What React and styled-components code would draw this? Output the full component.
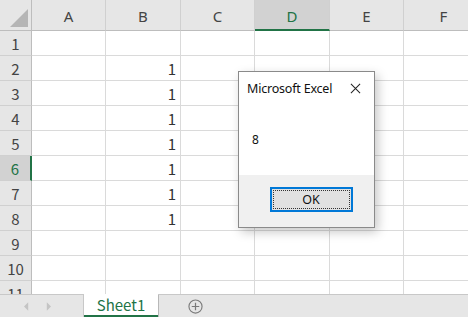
import React from "react";
import styled, { createGlobalStyle, css } from "styled-components";

const GlobalStyle = createGlobalStyle`
  html, body {
    margin: 0;
    padding: 0;
    background: #ffffff;
    overflow: hidden;
  }
  * { box-sizing: border-box; }
`;

const COLS = ["A", "B", "C", "D", "E", "F"];
const COL_WIDTHS = [74, 75, 74, 75, 74, 80];
const ROWS = [1, 2, 3, 4, 5, 6, 7, 8, 9, 10, 11];
const SELECTED_COL = "D";
const SELECTED_ROW = 6;

const values = { 2: "1", 3: "1", 4: "1", 5: "1", 6: "1", 7: "1", 8: "1" };

export default function App() {
  return (
    <>
      <GlobalStyle />
      <Page>
        <Sheet>
          <Grid>
            <Corner>
              <Triangle />
            </Corner>
            {COLS.map((c) => (
              <ColHeader key={c} $selected={c === SELECTED_COL}>
                {c}
              </ColHeader>
            ))}
            {ROWS.map((r) => (
              <React.Fragment key={r}>
                <RowHeader $selected={r === SELECTED_ROW}>{r}</RowHeader>
                {COLS.map((c) => (
                  <Cell key={c}>{c === "B" ? values[r] : null}</Cell>
                ))}
              </React.Fragment>
            ))}
          </Grid>

          <Dialog>
            <DialogBody>
              <TitleRow>
                <Title>Microsoft Excel</Title>
                <CloseIcon viewBox="0 0 12 12">
                  <path d="M1 1 L11 11 M11 1 L1 11" stroke="#222" strokeWidth="1.1" />
                </CloseIcon>
              </TitleRow>
              <Message>8</Message>
            </DialogBody>
            <DialogFooter>
              <OkButton>
                <Focus>OK</Focus>
              </OkButton>
            </DialogFooter>
          </Dialog>
        </Sheet>

        <TabBar>
          <Nav>
            <Arrow viewBox="0 0 6 10">
              <path d="M5 0 L0 5 L5 10 Z" fill="#c4c4c4" />
            </Arrow>
            <Arrow viewBox="0 0 6 10">
              <path d="M1 0 L6 5 L1 10 Z" fill="#c4c4c4" />
            </Arrow>
          </Nav>
          <Tab>Sheet1</Tab>
          <TabRest>
            <PlusIcon viewBox="0 0 16 16">
              <circle cx="8" cy="8" r="7" fill="none" stroke="#7a7a7a" strokeWidth="1.2" />
              <path d="M8 4 V12 M4 8 H12" stroke="#7a7a7a" strokeWidth="1.3" />
            </PlusIcon>
          </TabRest>
        </TabBar>
      </Page>
    </>
  );
}

const Page = styled.div`
  width: 468px;
  height: 325px;
  display: flex;
  flex-direction: column;
  background: #ffffff;
  font-family: "Noto Sans", "Liberation Sans", sans-serif;
`;

const Sheet = styled.div`
  position: relative;
  height: 294px;
  overflow: hidden;
  flex: none;
`;

const Grid = styled.div`
  display: grid;
  grid-template-columns: 32px ${COL_WIDTHS.map((w) => w + "px").join(" ")};
  grid-template-rows: 31px repeat(11, 25px);
`;

const headerBase = css`
  background: #e6e6e6;
  color: #444444;
  font-family: "Noto Sans", "Liberation Sans", sans-serif;
  font-size: 15px;
  display: flex;
  align-items: center;
  justify-content: center;
`;

const Corner = styled.div`
  ${headerBase};
  position: relative;
  border-right: 1px solid #bdbdbd;
  border-bottom: 1px solid #bdbdbd;
`;

const Triangle = styled.div`
  position: absolute;
  right: 3px;
  bottom: 3px;
  width: 18px;
  height: 18px;
  background: #b5b5b5;
  clip-path: polygon(100% 0, 100% 100%, 0 100%);
`;

const ColHeader = styled.div`
  ${headerBase};
  padding-top: 2px;
  border-right: 1px solid #d0d0d0;
  border-bottom: ${(p) => (p.$selected ? "2px solid #217346" : "1px solid #bdbdbd")};
  background: ${(p) => (p.$selected ? "#d2d2d2" : "#e6e6e6")};
  color: ${(p) => (p.$selected ? "#217346" : "#444444")};
`;

const RowHeader = styled.div`
  ${headerBase};
  font-family: "Noto Sans CJK JP", "Noto Sans", sans-serif;
  font-size: 15px;
  border-bottom: 1px solid #d0d0d0;
  border-right: ${(p) => (p.$selected ? "2px solid #217346" : "1px solid #bdbdbd")};
  background: ${(p) => (p.$selected ? "#d2d2d2" : "#e6e6e6")};
  color: ${(p) => (p.$selected ? "#217346" : "#444444")};
`;

const Cell = styled.div`
  border-right: 1px solid #dadada;
  border-bottom: 1px solid #dadada;
  display: flex;
  align-items: center;
  justify-content: flex-end;
  padding-right: 4px;
  font-family: "Noto Sans CJK JP", "Noto Sans", sans-serif;
  font-size: 15px;
  color: #333333;
`;

const Dialog = styled.div`
  position: absolute;
  left: 238px;
  top: 71px;
  width: 137px;
  height: 157px;
  background: #ffffff;
  border: 1px solid #8a8a8a;
  box-shadow: 3px 4px 10px rgba(0, 0, 0, 0.22);
  display: flex;
  flex-direction: column;
`;

const DialogBody = styled.div`
  flex: 1;
  padding: 7px 12px 0 8px;
`;

const TitleRow = styled.div`
  display: flex;
  align-items: center;
  justify-content: space-between;
  height: 18px;
`;

const Title = styled.span`
  font-family: "Noto Sans", "Liberation Sans", sans-serif;
  font-size: 12.5px;
  letter-spacing: -0.2px;
  color: #111111;
`;

const CloseIcon = styled.svg`
  width: 11px;
  height: 11px;
  margin-right: 1px;
`;

const Message = styled.div`
  margin-top: 34px;
  margin-left: 5px;
  font-family: "Noto Sans", "Liberation Sans", sans-serif;
  font-size: 12px;
  color: #111111;
`;

const DialogFooter = styled.div`
  height: 52px;
  background: #f0f0f0;
  display: flex;
  justify-content: center;
  padding-top: 12px;
  padding-left: 9px;
`;

const OkButton = styled.div`
  width: 83px;
  height: 25px;
  border: 2px solid #0078d7;
  background: #e1e1e1;
  padding: 1px;
`;

const Focus = styled.div`
  width: 100%;
  height: 100%;
  border: 1px dotted #333333;
  display: flex;
  align-items: center;
  justify-content: center;
  font-family: "Noto Sans", "Liberation Sans", sans-serif;
  font-size: 12.5px;
  color: #111111;
`;

const TabBar = styled.div`
  height: 23px;
  flex: none;
  display: flex;
  background: #e6e6e6;
  border-top: 1px solid #c8c8c8;
`;

const Nav = styled.div`
  width: 84px;
  display: flex;
  align-items: center;
  justify-content: center;
  gap: 17px;
  padding-right: 8px;
  border-right: 1px solid #c8c8c8;
`;

const Arrow = styled.svg`
  width: 5px;
  height: 9px;
`;

const Tab = styled.div`
  width: 74px;
  margin-top: -2px;
  background: #ffffff;
  border-bottom: 2px solid #217346;
  color: #217346;
  font-family: "Noto Sans CJK JP", "Noto Sans", sans-serif;
  font-size: 15px;
  display: flex;
  align-items: center;
  justify-content: center;
`;

const TabRest = styled.div`
  flex: 1;
  display: flex;
  align-items: center;
  padding-left: 29px;
  border-left: 1px solid #b8b8b8;
`;

const PlusIcon = styled.svg`
  width: 15px;
  height: 15px;
`;
